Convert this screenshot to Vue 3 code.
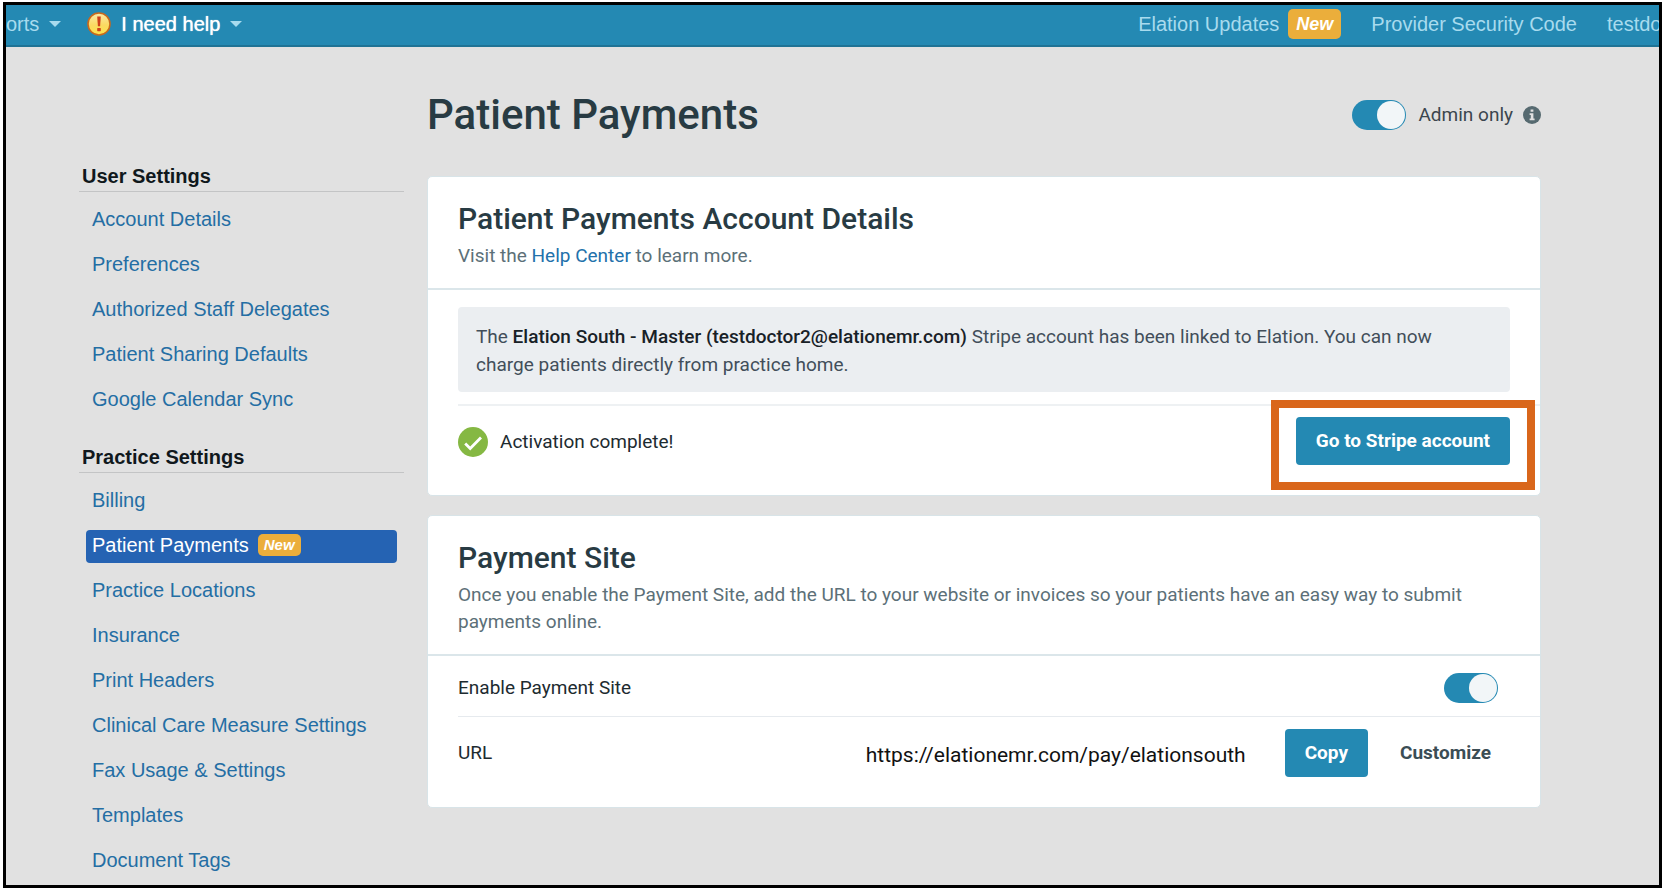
<script setup>
import { ref } from 'vue'

const userLinks = [
  'Account Details',
  'Preferences',
  'Authorized Staff Delegates',
  'Patient Sharing Defaults',
  'Google Calendar Sync',
]
const practiceLinks = [
  'Billing',
  'Patient Payments',
  'Practice Locations',
  'Insurance',
  'Print Headers',
  'Clinical Care Measure Settings',
  'Fax Usage & Settings',
  'Templates',
  'Document Tags',
]
const current = 'Patient Payments'
const adminOnly = ref(true)
const siteEnabled = ref(true)
</script>

<template>
  <div class="frame">
    <header class="topbar">
      <nav class="group">
        <a class="nav-link" href="#">orts<span class="caret"></span></a>
        <a class="nav-link help" href="#">
          <svg class="alert" viewBox="0 0 24 24" aria-hidden="true">
            <defs>
              <linearGradient id="alertFill" x1="0" y1="0" x2="0" y2="1">
                <stop offset="0" stop-color="#fbe9a8" />
                <stop offset="0.55" stop-color="#fbd962" />
                <stop offset="1" stop-color="#fde34a" />
              </linearGradient>
            </defs>
            <circle cx="12" cy="12" r="11" fill="url(#alertFill)" stroke="#c8681c" stroke-width="1.6" />
            <path d="M10.2 4.5h3.6l-.7 9.7h-2.2z" fill="#d0401a" />
            <rect x="10.2" y="16" width="3.6" height="3.2" rx="0.6" fill="#d0401a" />
          </svg>
          I need help<span class="caret"></span>
        </a>
      </nav>
      <nav class="group right">
        <a class="nav-link" href="#">Elation Updates<span class="badge large">New</span></a>
        <a class="nav-link" href="#">Provider Security Code</a>
        <a class="nav-link account" href="#">testdo</a>
      </nav>
    </header>

    <div class="page">
      <aside class="sidebar">
        <section class="menu">
          <h2 class="menu-title">User Settings</h2>
          <ul class="menu-list">
            <li v-for="item in userLinks" :key="item">
              <a class="menu-link" href="#">{{ item }}</a>
            </li>
          </ul>
        </section>
        <section class="menu">
          <h2 class="menu-title">Practice Settings</h2>
          <ul class="menu-list">
            <li v-for="item in practiceLinks" :key="item">
              <a class="menu-link" :class="{ active: item === current }" href="#"
                >{{ item }}<span v-if="item === current" class="badge">New</span></a
              >
            </li>
          </ul>
        </section>
      </aside>

      <main class="main">
        <div class="title-row">
          <h1 class="title">Patient Payments</h1>
          <div class="admin">
            <input id="admin-only" v-model="adminOnly" class="switch" type="checkbox" />
            <label for="admin-only">Admin only</label>
            <svg class="info" viewBox="0 0 18 18" aria-hidden="true">
              <circle cx="9" cy="9" r="9" fill="#566a70" />
              <path d="M7.6 3.4h2.8v2.4H7.6zM6.6 7.2h3.8v5.2h1.2v1.8H6.6v-1.8h1.2V9H6.6z" fill="#e1e1e1" />
            </svg>
          </div>
        </div>

        <section class="card">
          <div class="card-head">
            <h2 class="card-title">Patient Payments Account Details</h2>
            <p class="card-text">Visit the <a class="text-link" href="#">Help Center</a> to learn more.</p>
          </div>
          <div class="card-body">
            <p class="notice">
              The <strong>Elation South - Master (testdoctor2@elationemr.com)</strong> Stripe account has been
              linked to Elation. You can now charge patients directly from practice home.
            </p>
            <div class="row status">
              <svg class="check" viewBox="0 0 30 30" aria-hidden="true">
                <circle cx="15" cy="15" r="15" fill="#85b843" />
                <path d="M7.2 16.4l5 5L23 10.4" fill="none" stroke="#fff" stroke-width="2.8" />
              </svg>
              <span>Activation complete!</span>
              <div class="callout">
                <button class="button" type="button">Go to Stripe account</button>
              </div>
            </div>
          </div>
        </section>

        <section class="card">
          <div class="card-head">
            <h2 class="card-title">Payment Site</h2>
            <p class="card-text">
              Once you enable the Payment Site, add the URL to your website or invoices so your patients have an
              easy way to submit payments online.
            </p>
          </div>
          <div class="card-body">
            <div class="row enable">
              <label for="enable-site">Enable Payment Site</label>
              <input id="enable-site" v-model="siteEnabled" class="switch" type="checkbox" />
            </div>
            <div class="row url">
              <span>URL</span>
              <span class="address">https://elationemr.com/pay/elationsouth</span>
              <button class="button" type="button">Copy</button>
              <button class="button plain" type="button">Customize</button>
            </div>
          </div>
        </section>
      </main>
    </div>
  </div>
</template>

<style>
html,
body {
  margin: 0;
  background: #fff;
}
</style>

<style scoped>
* {
  box-sizing: border-box;
}
h1,
h2,
p,
ul {
  margin: 0;
  padding: 0;
}
a {
  text-decoration: none;
}
.frame {
  height: calc(100vh - 4px);
  margin: 2px 2px 2px 3px;
  border: 3px solid #000;
  background: #e1e1e1;
  overflow: hidden;
  font-family: Roboto, "Liberation Sans", sans-serif;
  font-size: 19px;
  line-height: 28px;
  color: #1d2b30;
}

.topbar {
  display: flex;
  justify-content: space-between;
  height: 42px;
  padding-bottom: 2px;
  border-bottom: 2px solid #1f7395;
  background: #2489b3;
  font-family: "Liberation Sans", Arial, sans-serif;
  font-size: 20px;
  line-height: 24px;
  white-space: nowrap;
}
.group {
  display: flex;
  align-items: center;
  gap: 26px;
}
.group.right {
  gap: 30px;
}
.nav-link {
  display: flex;
  align-items: center;
  color: #a8dbee;
}
.help {
  color: #fff;
  text-shadow: 0 0 1px #fff;
}
.account {
  width: 52px;
}
.caret {
  margin-left: 10px;
  border: 6px solid transparent;
  border-top-color: #a8dbee;
  border-bottom: 0;
}
.alert {
  width: 24px;
  height: 24px;
  margin-right: 10px;
}
.badge {
  margin-left: 9px;
  padding: 0 6px;
  border-radius: 5px;
  background: #ebae3b;
  color: #fff;
  font-size: 15px;
  font-weight: bold;
  font-style: italic;
  line-height: 22px;
}
.badge.large {
  padding: 0 8px;
  font-size: 18px;
  line-height: 30px;
}

.page {
  display: flex;
  gap: 23px;
  padding: 0 118px 0 73px;
}
.sidebar {
  flex: 0 0 325px;
  padding-top: 116px;
  font-family: "Liberation Sans", Arial, sans-serif;
}
.menu {
  margin-bottom: 27px;
}
.menu-title {
  height: 29px;
  padding-left: 3px;
  border-bottom: 1px solid #c3c4c5;
  color: #10181c;
  font-size: 20px;
  font-weight: bold;
  line-height: 27px;
}
.menu-list {
  display: flex;
  flex-direction: column;
  gap: 12px;
  margin: 12px 7px 0;
  list-style: none;
}
.menu-link {
  display: flex;
  align-items: center;
  height: 33px;
  padding: 0 6px 3px;
  border-radius: 4px;
  color: #246ea4;
  font-size: 20px;
  white-space: nowrap;
}
.menu-link.active {
  background: #2563b3;
  color: #fff;
}

.main {
  flex: 1;
  min-width: 0;
}
.title-row {
  display: flex;
  align-items: center;
  justify-content: space-between;
  height: 129px;
  padding-top: 7px;
}
.title {
  color: #283b43;
  font-size: 42px;
  font-weight: 500;
  line-height: 50px;
}
.admin {
  display: flex;
  align-items: center;
  color: #3b464e;
}
.admin label {
  margin: 0 10px 0 12px;
}
.info {
  width: 18px;
  height: 18px;
}
.switch {
  flex: none;
  width: 54px;
  height: 30px;
  margin: 0;
  border-radius: 15px;
  background: #8a979c;
  appearance: none;
}
.switch::before {
  content: "";
  display: block;
  width: 28px;
  height: 28px;
  margin: 1px;
  border-radius: 14px;
  background: #f2f6f8;
}
.switch:checked {
  background: #2489b3;
}
.switch:checked::before {
  margin-left: 25px;
}

.card {
  margin-bottom: 19px;
  border: 1px solid #d8e4e8;
  border-radius: 5px;
  background: #fff;
}
.card-head {
  padding: 24px 30px 19px;
  border-bottom: 2px solid #dbe6ea;
}
.card-title {
  color: #283b43;
  font-size: 30px;
  font-weight: 500;
  line-height: 36px;
}
.card-text {
  margin-top: 5px;
  color: #5c7078;
  line-height: 27px;
}
.text-link {
  color: #2271ab;
}
.card-body {
  padding-left: 30px;
}
.notice {
  margin: 17px 30px 12px 0;
  padding: 16px 18px 13px;
  border-radius: 4px;
  background: #ebeef1;
  color: #424e5a;
}
.notice strong {
  color: #182127;
  font-weight: 500;
}
.row {
  display: flex;
  align-items: center;
}
.status {
  height: 91px;
  padding: 0 5px 18px 0;
  border-top: 2px solid #eef1f3;
}
.check {
  width: 30px;
  height: 30px;
  margin-right: 12px;
}
.callout {
  align-self: flex-start;
  margin: -6px 0 -13px auto;
  padding: 9px 17px 17px;
  border: 8px solid #d9661b;
  background: #fff;
}
.button {
  display: block;
  height: 48px;
  padding: 0 20px;
  border: 0;
  border-radius: 4px;
  background: #2489b3;
  color: #fff;
  font: 700 19px/28px Roboto, "Liberation Sans", sans-serif;
}
.enable {
  justify-content: space-between;
  height: 60px;
  padding: 4px 42px 0 0;
}
.url {
  height: 91px;
  padding: 0 29px 19px 0;
  border-top: 1px solid #e6eaee;
}
.address {
  margin: 4px 39px 0 auto;
  color: #111;
  font-size: 21px;
}
.button.plain {
  margin-left: 12px;
  background: none;
  color: #3b4d55;
}
</style>
